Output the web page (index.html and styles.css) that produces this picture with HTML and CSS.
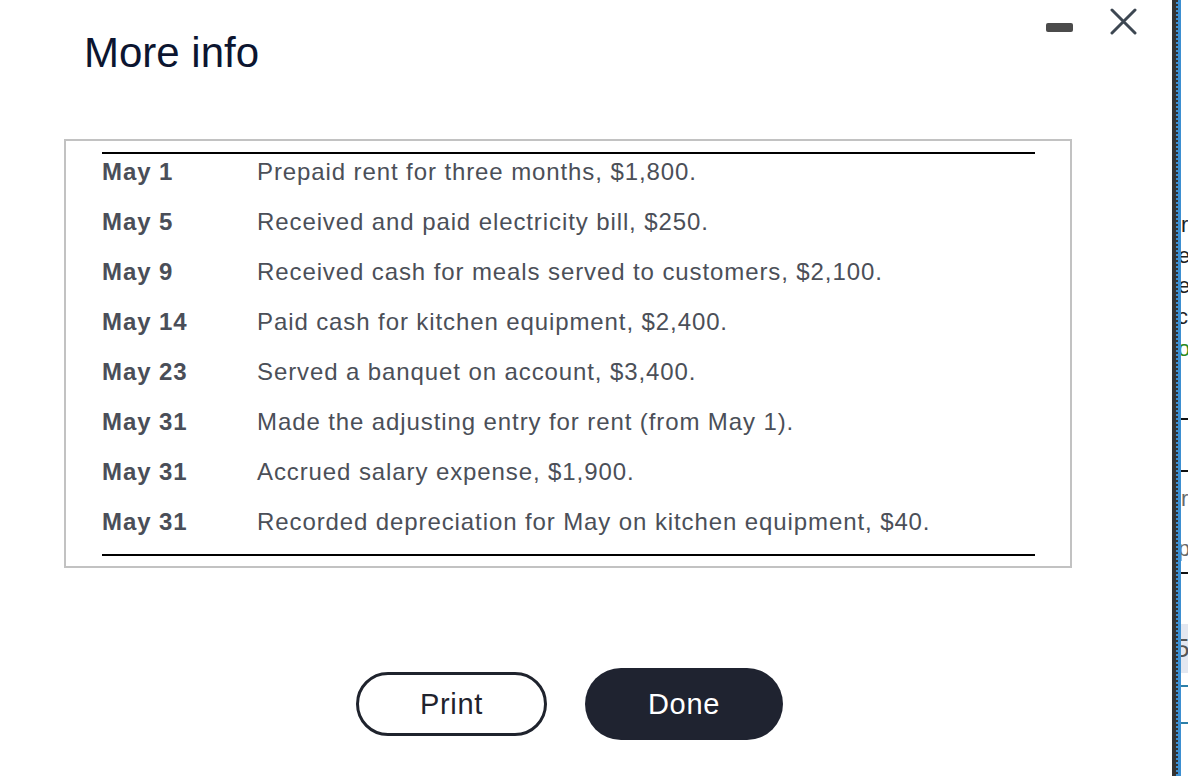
FILE: index.html
```html
<!DOCTYPE html>
<html lang="en">
<head>
<meta charset="utf-8">
<title>More info</title>
<link rel="stylesheet" href="styles.css">
</head>
<body>
<div class="screen">
  <div class="dialog">
    <header class="dialog-header">
      <h1 class="dialog-title">More info</h1>
      <div class="window-controls">
        <button class="ctl ctl-min" aria-label="Minimize"><span class="min-bar"></span></button>
        <button class="ctl ctl-close" aria-label="Close">
          <svg width="27" height="27" viewBox="0 0 27 27"><path d="M2 2 L25 25 M25 2 L2 25" stroke="#3d4752" stroke-width="3" stroke-linecap="round" fill="none"/></svg>
        </button>
      </div>
    </header>

    <section class="info-box">
      <div class="info-table">
        <div class="info-row"><span class="info-date">May 1</span><span class="info-desc">Prepaid rent for three months, $1,800.</span></div>
        <div class="info-row"><span class="info-date">May 5</span><span class="info-desc">Received and paid electricity bill, $250.</span></div>
        <div class="info-row"><span class="info-date">May 9</span><span class="info-desc">Received cash for meals served to customers, $2,100.</span></div>
        <div class="info-row"><span class="info-date">May 14</span><span class="info-desc">Paid cash for kitchen equipment, $2,400.</span></div>
        <div class="info-row"><span class="info-date">May 23</span><span class="info-desc">Served a banquet on account, $3,400.</span></div>
        <div class="info-row"><span class="info-date">May 31</span><span class="info-desc">Made the adjusting entry for rent (from May 1).</span></div>
        <div class="info-row"><span class="info-date">May 31</span><span class="info-desc">Accrued salary expense, $1,900.</span></div>
        <div class="info-row"><span class="info-date">May 31</span><span class="info-desc">Recorded depreciation for May on kitchen equipment, $40.</span></div>
      </div>
    </section>

    <div class="actions">
      <button class="btn btn-outline">Print</button>
      <button class="btn btn-solid">Done</button>
    </div>
  </div>

  <div class="behind">
    <div class="edge-dark"></div>
    <div class="edge-dash"></div>
    <div class="edge-blue"></div>
    <div class="behind-content">
      <span class="frag frag-r1">r</span>
      <span class="frag frag-e1">e</span>
      <span class="frag frag-e2">e</span>
      <span class="frag frag-ct">ct</span>
      <span class="frag frag-green">o</span>
      <span class="hline hline-1"></span>
      <span class="hline hline-2"></span>
      <span class="frag frag-r2">r</span>
      <span class="frag frag-p">p</span>
      <span class="hline hline-3"></span>
      <span class="shade"><span class="shade-text">50</span></span>
      <span class="bline bline-1"></span>
      <span class="bline bline-2"></span>
    </div>
  </div>
</div>
</body>
</html>
```

FILE: styles.css
```css
html, body {
  margin: 0;
  padding: 0;
  background: #ffffff;
}

body {
  font-family: "Liberation Sans", Arial, Helvetica, sans-serif;
}

.screen {
  display: flex;
  width: 1188px;
  height: 776px;
  overflow: hidden;
}

.dialog {
  flex: none;
  width: 1172px;
  background: #ffffff;
}

/* Header */
.dialog-header {
  display: flex;
  justify-content: space-between;
  align-items: flex-start;
  height: 139px;
  padding-left: 86px;
  padding-right: 35px;
  box-sizing: border-box;
}

.dialog-title {
  margin: 29px 0 0 -2px;
  font-size: 42px;
  line-height: 48px;
  font-weight: 400;
  color: #0c1530;
}

.window-controls {
  display: flex;
  gap: 37px;
  margin-top: 8px;
}

.ctl {
  display: flex;
  width: 27px;
  height: 27px;
  padding: 0;
  border: 0;
  background: transparent;
}

.ctl-min {
  align-items: flex-end;
  padding-bottom: 3px;
  box-sizing: border-box;
}

.min-bar {
  display: block;
  width: 27px;
  height: 9px;
  border-radius: 2px;
  background: #4b4b4b;
}

/* Info box */
.info-box {
  margin-left: 64px;
  width: 1008px;
  height: 429px;
  box-sizing: border-box;
  border: 2px solid #c2c2c2;
  padding: 11px 35px 0 36px;
}

.info-table {
  border-top: 2px solid #000000;
  border-bottom: 2px solid #000000;
}

.info-row {
  display: flex;
  height: 50px;
  box-sizing: border-box;
  padding-top: 4px;
  font-size: 24px;
  line-height: 28px;
  letter-spacing: 0.9px;
  color: #4b4f58;
}

.info-date {
  flex: none;
  width: 155px;
  font-weight: 700;
  letter-spacing: 0.9px;
  color: #4a4e58;
}

.info-desc {
  flex: 1;
}

/* Actions */
.actions {
  display: flex;
  justify-content: center;
  align-items: center;
  gap: 38px;
  margin-left: 64px;
  width: 1008px;
  height: 72px;
  margin-top: 100px;
  padding-left: 3px;
  box-sizing: border-box;
}

.btn {
  font-family: "Liberation Sans", Arial, Helvetica, sans-serif;
  font-size: 29px;
  letter-spacing: 0.7px;
  border-radius: 40px;
  box-sizing: border-box;
  cursor: pointer;
}

.btn-outline {
  width: 191px;
  height: 64px;
  border: 3px solid #1f232d;
  background: #ffffff;
  color: #1f232d;
}

.btn-solid {
  width: 198px;
  height: 72px;
  border: 0;
  background: #1f2330;
  color: #ffffff;
}

/* Window behind */
.behind {
  flex: none;
  display: flex;
  width: 16px;
  height: 776px;
}

.edge-dark {
  width: 4px;
  background: #333333;
}

.edge-dash {
  width: 2px;
  background: repeating-linear-gradient(to bottom, #333333 0 2px, #3d8fd1 2px 4px);
}

.edge-blue {
  width: 3px;
  background: #3d8fd1;
}

.behind-content {
  position: relative;
  flex: 1;
  overflow: hidden;
  background: #ffffff;
}

.frag {
  position: absolute;
  left: 0;
  font-size: 22px;
  line-height: 22px;
  color: #222222;
  white-space: nowrap;
}

.frag-r1 { top: 214px; }
.frag-e1 { top: 245px; left: -3px; }
.frag-e2 { top: 275px; left: -3px; }
.frag-ct { top: 306px; left: -4px; }
.frag-green { top: 338px; left: -3px; color: #2e8b1e; }
.frag-r2 { top: 488px; color: #6a6a6a; }
.frag-p { top: 538px; left: -3px; color: #6a6a6a; }

.hline {
  position: absolute;
  left: 0;
  width: 7px;
  height: 2px;
  background: #111111;
}

.hline-1 { top: 418px; }
.hline-2 { top: 470px; }
.hline-3 { top: 572px; }

.shade {
  position: absolute;
  left: 0;
  top: 624px;
  width: 7px;
  height: 49px;
  background: #e3e7f0;
}

.shade-text {
  position: absolute;
  left: -6px;
  top: 10px;
  font-size: 26px;
  line-height: 28px;
  color: #555555;
}

.bline {
  position: absolute;
  left: 0;
  width: 7px;
  height: 2px;
  background: #2d7fa8;
}

.bline-1 { top: 685px; }
.bline-2 { top: 722px; }
```
